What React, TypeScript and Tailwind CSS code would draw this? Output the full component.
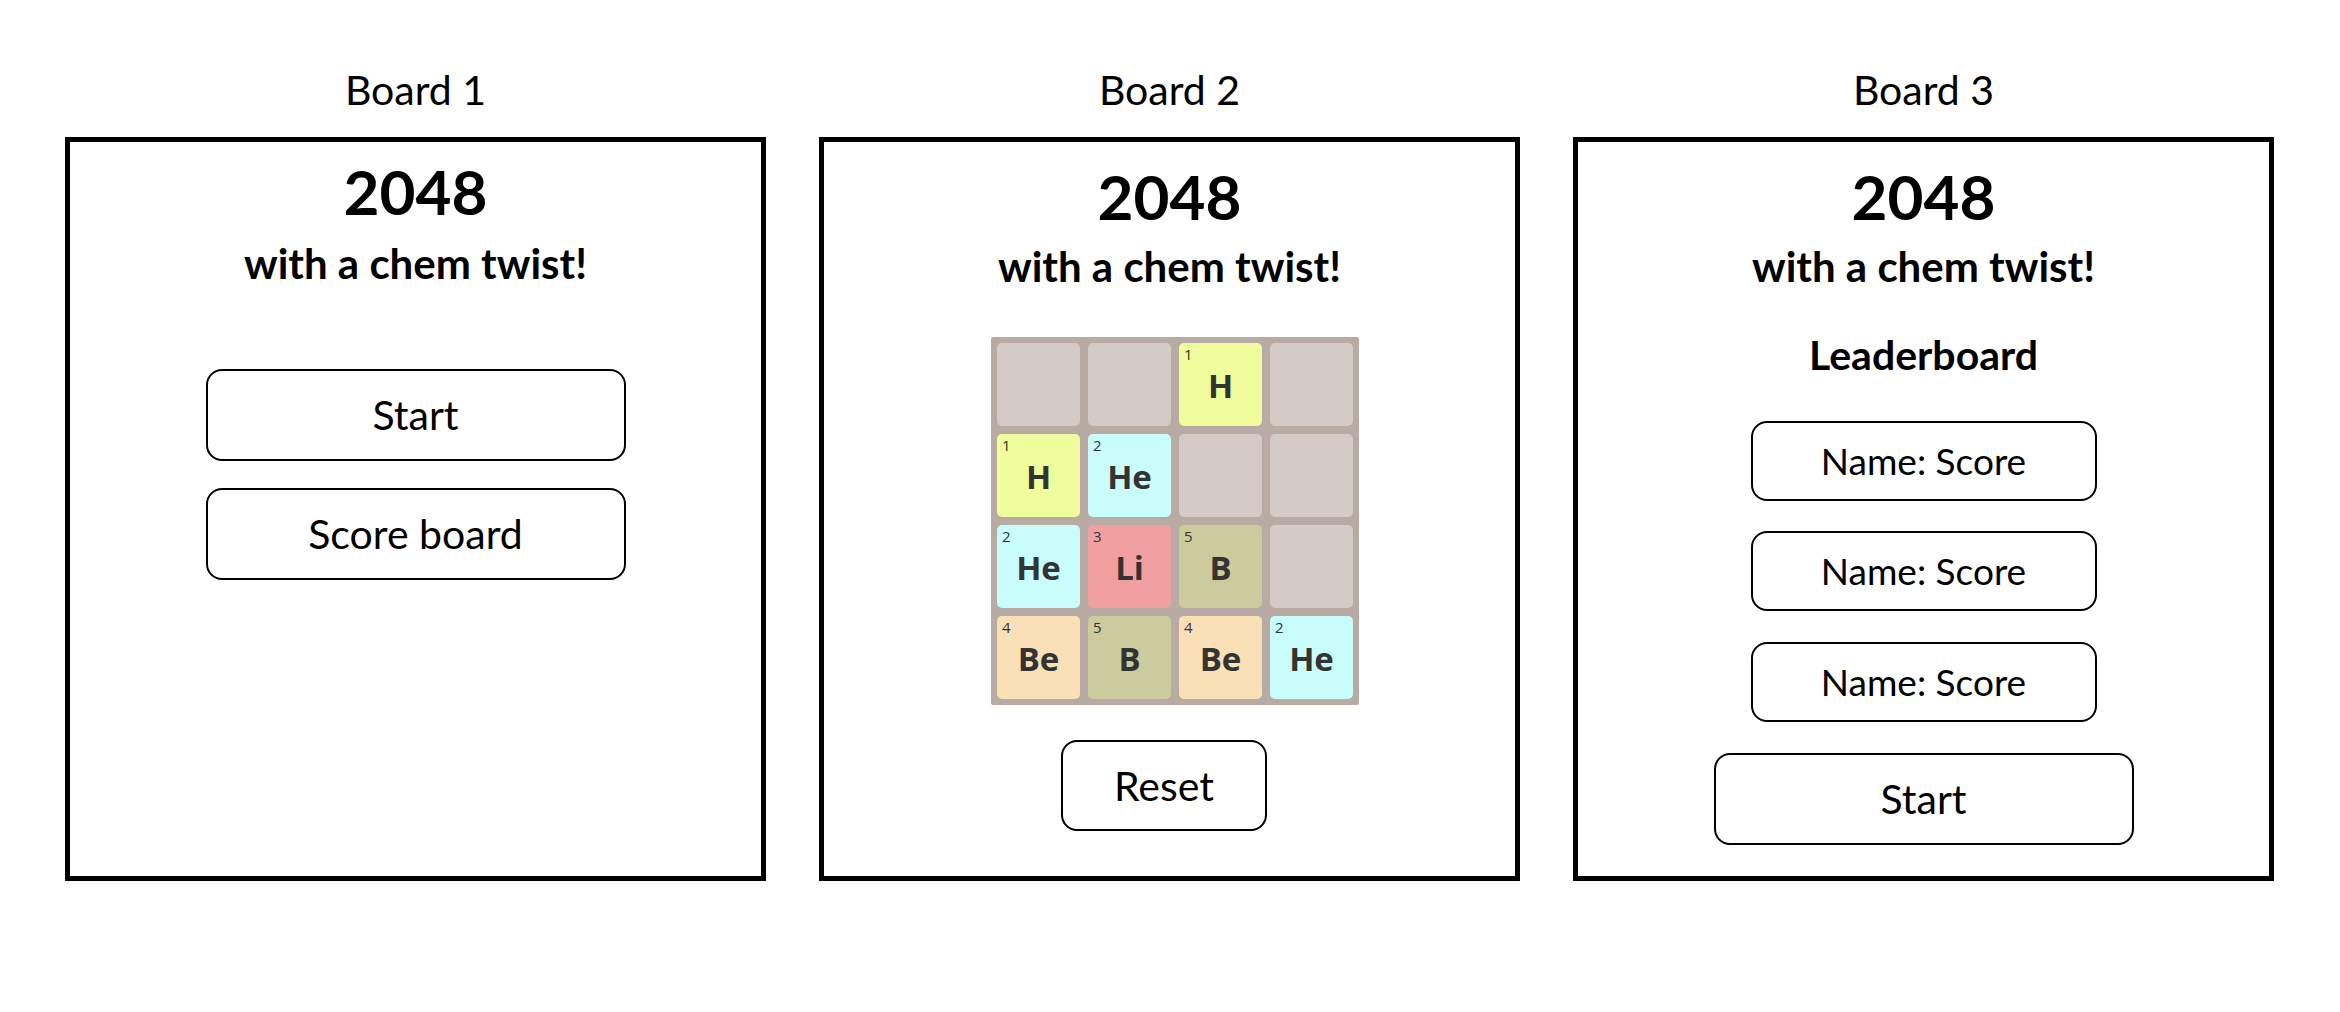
import React from 'react';

type Tile = { n: number; sym: string } | null;

const tileColors: Record<string, string> = {
  H: 'bg-[#effd9d]',
  He: 'bg-[#c9fdfc]',
  Li: 'bg-[#f0a0a0]',
  Be: 'bg-[#fae0b6]',
  B: 'bg-[#cbcb9d]',
};

const grid: Tile[] = [
  null, null, { n: 1, sym: 'H' }, null,
  { n: 1, sym: 'H' }, { n: 2, sym: 'He' }, null, null,
  { n: 2, sym: 'He' }, { n: 3, sym: 'Li' }, { n: 5, sym: 'B' }, null,
  { n: 4, sym: 'Be' }, { n: 5, sym: 'B' }, { n: 4, sym: 'Be' }, { n: 2, sym: 'He' },
];

function OutlineButton({ label, className }: { label: string; className: string }) {
  return (
    <div
      className={`flex items-center justify-center rounded-[16px] border-2 border-black bg-white text-black ${className}`}
    >
      {label}
    </div>
  );
}

function Heading({ top, gap }: { top: string; gap: string }) {
  return (
    <>
      <div className={`${top} text-[62px] font-bold leading-[64px]`}>2048</div>
      <div className={`${gap} text-[42px] font-bold leading-[48px]`}>with a chem twist!</div>
    </>
  );
}

function Board({ label, children }: { label: string; children: React.ReactNode }) {
  return (
    <div className="flex w-[701px] flex-col items-center">
      <div className="text-[41px] leading-[48px]">{label}</div>
      <div className="mt-[23px] flex h-[744px] w-[701px] flex-col items-center border-[5px] border-black bg-white">
        {children}
      </div>
    </div>
  );
}

function GameGrid() {
  return (
    <div className="grid h-[368px] w-[368px] grid-cols-4 gap-[8px] rounded-[2px] bg-[#b8aba3] p-[6px]">
      {grid.map((t, i) =>
        t ? (
          <div
            key={i}
            className={`relative flex items-center justify-center rounded-[5px] ${tileColors[t.sym]}`}
          >
            <span className="absolute left-[5px] top-[2px] font-['Open_Sans',sans-serif] text-[15px] leading-[18px] text-[#333]">
              {t.n}
            </span>
            <span className="mt-[2px] font-['Open_Sans',sans-serif] text-[33px] font-bold leading-none text-[#333]">
              {t.sym}
            </span>
          </div>
        ) : (
          <div key={i} className="rounded-[5px] bg-[#d5cbc6]" />
        ),
      )}
    </div>
  );
}

export default function App() {
  return (
    <div className="min-h-screen w-[2340px] bg-white font-['Lato',sans-serif] text-black">
      <div className="flex gap-[53px] pl-[65px] pt-[66px]">
        <Board label="Board 1">
          <Heading top="mt-[17px]" gap="mt-[16px]" />
          <OutlineButton label="Start" className="mt-[82px] h-[92px] w-[420px] text-[41px]" />
          <OutlineButton label="Score board" className="mt-[27px] h-[92px] w-[420px] text-[41px]" />
        </Board>

        <Board label="Board 2">
          <Heading top="mt-[22px]" gap="mt-[14px]" />
          <div className="ml-[11px] mt-[47px]">
            <GameGrid />
          </div>
          <OutlineButton label="Reset" className="mr-[11px] mt-[35px] h-[91px] w-[206px] text-[41px]" />
        </Board>

        <Board label="Board 3">
          <Heading top="mt-[22px]" gap="mt-[14px]" />
          <div className="mt-[43px] text-[41px] font-bold leading-[44px]">Leaderboard</div>
          <OutlineButton label="Name: Score" className="mt-[44px] h-[80px] w-[346px] text-[37px]" />
          <OutlineButton label="Name: Score" className="mt-[30px] h-[80px] w-[346px] text-[37px]" />
          <OutlineButton label="Name: Score" className="mt-[31px] h-[80px] w-[346px] text-[37px]" />
          <OutlineButton label="Start" className="mt-[31px] h-[92px] w-[420px] text-[41px]" />
        </Board>
      </div>
    </div>
  );
}
